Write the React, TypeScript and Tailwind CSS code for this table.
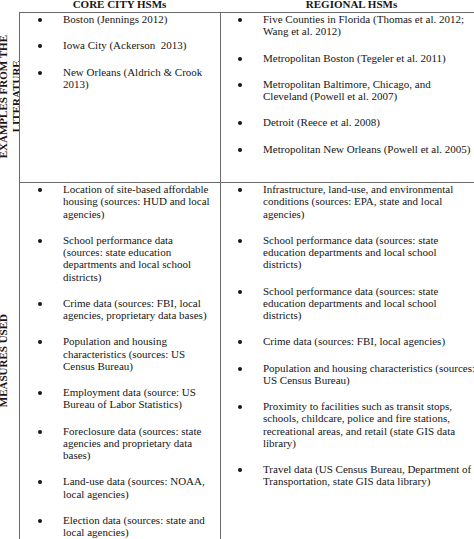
const coreExamples = [
  "Boston (Jennings 2012)",
  "Iowa City (Ackerson\u00a0 2013)",
  "New Orleans (Aldrich & Crook 2013)",
];

const regionalExamples = [
  "Five Counties in Florida (Thomas et al. 2012; Wang et al. 2012)",
  "Metropolitan Boston (Tegeler et al. 2011)",
  "Metropolitan Baltimore, Chicago, and Cleveland (Powell et al. 2007)",
  "Detroit (Reece et al. 2008)",
  "Metropolitan New Orleans (Powell et al. 2005)",
];

const coreMeasures = [
  "Location of site-based affordable housing (sources: HUD and local agencies)",
  "School performance data (sources: state education departments and local school districts)",
  "Crime data (sources: FBI, local agencies, proprietary data bases)",
  "Population and housing characteristics (sources: US Census Bureau)",
  "Employment data (source: US Bureau of Labor Statistics)",
  "Foreclosure data (sources: state agencies and proprietary data bases)",
  "Land-use data (sources: NOAA, local agencies)",
  "Election data (sources: state and local agencies)",
];

const regionalMeasures = [
  "Infrastructure, land-use, and environmental conditions (sources: EPA, state and local agencies)",
  "School performance data (sources: state education departments and local school districts)",
  "School performance data (sources: state education departments and local school districts)",
  "Crime data (sources: FBI, local agencies)",
  "Population and housing characteristics (sources: US Census Bureau)",
  "Proximity to facilities such as transit stops, schools, childcare, police and fire stations, recreational areas, and retail (state GIS data library)",
  "Travel data (US Census Bureau, Department of Transportation, state GIS data library)",
];

function BulletList({ items, left }: { items: string[]; left?: boolean }) {
  return (
    <ul className="flex flex-col gap-[14px]">
      {items.map((t, i) => (
        <li key={i} className="flex">
          <span className={left ? "w-[43px] shrink-0 pl-[18px]" : "w-[42px] shrink-0 pl-[17px]"}>
            <span className="mt-[5px] block h-[4px] w-[4px] rounded-full bg-[#161616]" />
          </span>
          <span className={left ? "w-[149px] shrink-0" : "w-[213px] shrink-0"}>{t}</span>
        </li>
      ))}
    </ul>
  );
}

function SideLabel({ children }: { children: React.ReactNode }) {
  return (
    <div className="flex items-center overflow-hidden">
      <div className="-ml-[3px] shrink-0 rotate-180 whitespace-nowrap text-center text-[11px] font-bold leading-[13px] [writing-mode:vertical-rl]">
        {children}
      </div>
    </div>
  );
}

export default function App() {
  return (
    <div className="h-[539px] w-[474px] overflow-hidden bg-white font-['Liberation_Serif','Times_New_Roman',serif] text-[11px] leading-[12.25px] text-[#161616]">
      <div className="grid w-[483px] grid-cols-[19px_201px_263px] grid-rows-[12px_170px_358px]">
        {/* header */}
        <div />
        <div className="flex items-end justify-center pb-[2px] font-bold">CORE CITY HSMs</div>
        <div className="flex items-end justify-center pb-[2px] font-bold">REGIONAL HSMs</div>

        {/* examples */}
        <SideLabel>
          EXAMPLES FROM THE
          <br />
          LITERATURE
        </SideLabel>
        <div className="border-l border-t border-[#6a6a6a]">
          <BulletList items={coreExamples} left />
        </div>
        <div className="border-l border-t border-[#6a6a6a]">
          <BulletList items={regionalExamples} />
        </div>

        {/* measures */}
        <SideLabel>MEASURES USED</SideLabel>
        <div className="border-l border-t border-[#6a6a6a]">
          <BulletList items={coreMeasures} left />
        </div>
        <div className="border-l border-t border-[#6a6a6a]">
          <BulletList items={regionalMeasures} />
        </div>
      </div>
    </div>
  );
}
